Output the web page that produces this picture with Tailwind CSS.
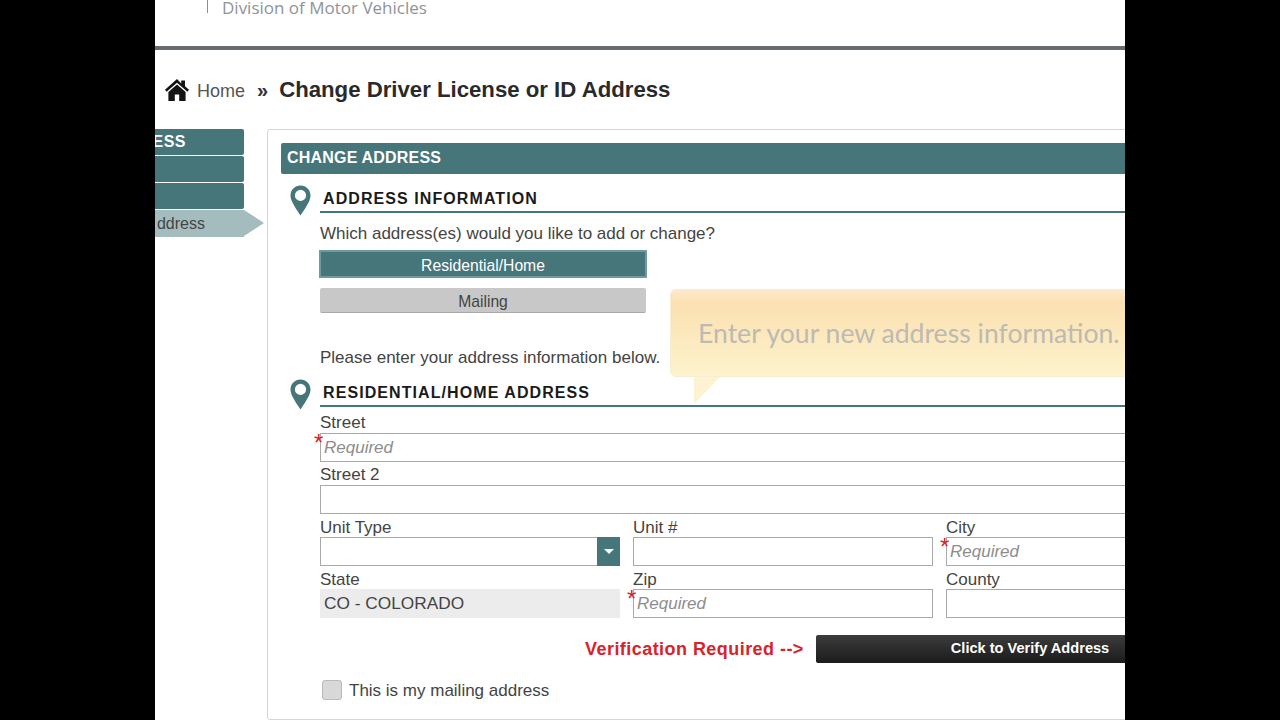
<!DOCTYPE html>
<html lang="en">
<head>
  <meta charset="UTF-8" />
  <title>Change Driver License or ID Address</title>
  <script src="https://cdn.jsdelivr.net/npm/@tailwindcss/browser@4"></script>
</head>
<body class="bg-black font-['Liberation_Sans',Arial,sans-serif] text-[#444]">
<div class="flex justify-center h-[720px] overflow-hidden">
  <main class="relative w-[970px] h-[720px] bg-white overflow-hidden">

    <!-- Header -->
    <header class="h-[50px] border-b-4 border-[#666c70] flex items-start">
      <span class="ml-[52px] w-px h-[13px] bg-[#8a8f94]"></span>
      <span class="ml-[14px] -mt-px font-['Open_Sans',sans-serif] text-[17px] leading-[17px] text-[#8f9498]">Division of Motor Vehicles</span>
    </header>

    <!-- Breadcrumb -->
    <nav class="h-[79px] flex items-center pl-[10px] pt-[1px]">
      <svg class="w-[24px] h-[22px] text-[#141414]" viewBox="0 0 24 22" fill="currentColor"><path d="M12 0 0 10.800l1.600 1.900L12 3.800l10.400 8.900 1.600-1.900-4-3.500V1.400h-3.800v3.100L12 0z"/><path d="M12 5.600 3.400 13v9h6.400v-6.400h4.400V22h6.400v-9L12 5.600z"/></svg>
      <a href="#" class="ml-[8px] text-[18px] mt-[3px] text-[#555]">Home</a>
      <span class="ml-[12px] text-[20px] font-bold text-[#333]">»</span>
      <h1 class="ml-[11px] text-[22.2px] font-bold text-[#2a2a2a]">Change Driver License or ID Address</h1>
    </nav>

    <div class="flex items-start">
      <!-- Side menu -->
      <aside class="w-[109px] shrink-0 flex flex-col gap-px text-[16px]">
        <div class="w-[89px] h-[26px] bg-[#46757a] rounded-r-[2px] text-white font-bold tracking-[0.5px] flex items-center justify-end pr-[58px]"><span class="whitespace-nowrap">ESS</span></div>
        <div class="w-[89px] h-[26px] bg-[#46757a] rounded-r-[2px]"></div>
        <div class="w-[89px] h-[26px] bg-[#46757a] rounded-r-[2px]"></div>
        <div class="relative w-[89px] h-[27px] bg-[#a4bcbe] text-[#444] flex items-center justify-end pr-[39px]">
          <span class="whitespace-nowrap">ddress</span>
          <span class="absolute left-[89px] top-0 border-y-[13.5px] border-y-transparent border-l-[20px] border-l-[#a4bcbe]"></span>
        </div>
      </aside>

      <!-- Panel -->
      <section class="ml-[3px] w-[900px] h-[591px] shrink-0 border border-[#d4d4d4] rounded-[3px] pt-[13px] pl-[13px]">
        <h2 class="h-[31px] bg-[#46757a] rounded-[2px] flex items-center pl-[6px] pb-[2px] text-white font-bold text-[16px] tracking-[0.2px]">CHANGE ADDRESS</h2>

        <div class="flex mt-[11px]">
          <svg class="ml-[9px] w-[21px] h-[31px] shrink-0" viewBox="0 0 21 31"><path fill-rule="evenodd" fill="#46757a" d="M10.500 0.500C4.800.5.500 4.900.500 10.500c0 4.600 3 9.700 10 20 7-10.300 10-15.400 10-20C20.500 4.900 16.200.5 10.500.5zm0 4.300a5.600 5.600 0 1 1 0 11.200 5.600 5.600 0 0 1 0-11.200z"/></svg>
          <h3 class="ml-[9px] w-[820px] h-[28px] border-b-2 border-[#46757a] pl-[3px] font-bold text-[16px] leading-[27px] tracking-[1.08px] text-[#1a1a1a]">ADDRESS INFORMATION</h3>
        </div>

        <div class="ml-[39px] -mt-[1px]">
          <p class="text-[17px] leading-[20px] mt-[9px]">Which address(es) would you like to add or change?</p>
          <button class="block -ml-px mt-[6px] pt-[3px] w-[328px] h-[28px] bg-[#46757a] border-2 border-[#6f9a9e] text-white text-[15.7px] leading-[20px]">Residential/Home</button>
          <button class="block mt-[10px] pt-[4px] w-[326px] h-[25px] bg-[#c8c8c8] border-b border-[#aaa] rounded-[2px] text-[#444] text-[15.7px] leading-[20px]">Mailing</button>
          <p class="text-[17px] leading-[20px] mt-[35px]">Please enter your address information below.</p>
        </div>

        <div class="flex mt-[12px]">
          <svg class="ml-[9px] -mt-px w-[21px] h-[31px] shrink-0" viewBox="0 0 21 31"><path fill-rule="evenodd" fill="#46757a" d="M10.500 0.500C4.800.5.500 4.900.500 10.500c0 4.600 3 9.700 10 20 7-10.300 10-15.400 10-20C20.500 4.900 16.200.5 10.500.5zm0 4.300a5.600 5.600 0 1 1 0 11.200 5.600 5.600 0 0 1 0-11.200z"/></svg>
          <h3 class="ml-[9px] -mt-px w-[820px] h-[28px] border-b-2 border-[#46757a] pl-[3px] font-bold text-[16px] leading-[28px] tracking-[1.08px] text-[#1a1a1a]">RESIDENTIAL/HOME ADDRESS</h3>
        </div>

        <!-- Address fields -->
        <div class="ml-[39px] -mt-[3px] grid grid-cols-[300px_300px_300px] gap-x-[13px] text-[17px]">
          <div class="col-span-3 w-[830px]">
            <label class="block h-[26px] leading-[32px]">Street</label>
            <div class="relative">
              <span class="absolute -left-[6px] -top-[2px] text-[#d8232a] text-[24px] leading-[24px]">*</span>
              <input class="block w-full h-[29px] border border-[#aaa] pl-[3px] placeholder:italic placeholder:text-[#8d8d8d]" placeholder="Required" />
            </div>
          </div>
          <div class="col-span-3 w-[830px]">
            <label class="block h-[23px] leading-[26px]">Street 2</label>
            <input class="block w-full h-[29px] border border-[#aaa]" />
          </div>
          <div>
            <label class="block h-[23px] leading-[27px]">Unit Type</label>
            <div class="flex h-[29px] border border-[#aaa]">
              <span class="flex-1"></span>
              <span class="w-[23px] -m-px h-[29px] bg-[#46757a] flex items-center justify-center"><span class="border-x-[5px] border-x-transparent border-t-[5px] border-t-white"></span></span>
            </div>
          </div>
          <div>
            <label class="block h-[23px] leading-[27px]">Unit #</label>
            <input class="block w-full h-[29px] border border-[#aaa]" />
          </div>
          <div>
            <label class="block h-[23px] leading-[27px]">City</label>
            <div class="relative">
              <span class="absolute -left-[6px] -top-[2px] text-[#d8232a] text-[24px] leading-[24px]">*</span>
              <input class="block w-full h-[29px] border border-[#aaa] pl-[3px] placeholder:italic placeholder:text-[#8d8d8d]" placeholder="Required" />
            </div>
          </div>
          <div>
            <label class="block h-[23px] leading-[27px]">State</label>
            <div class="h-[29px] bg-[#ececec] pl-[4px] leading-[29px] text-[17.3px]">CO - COLORADO</div>
          </div>
          <div>
            <label class="block h-[23px] leading-[27px]">Zip</label>
            <div class="relative">
              <span class="absolute -left-[6px] -top-[2px] text-[#d8232a] text-[24px] leading-[24px]">*</span>
              <input class="block w-full h-[29px] border border-[#aaa] pl-[3px] placeholder:italic placeholder:text-[#8d8d8d]" placeholder="Required" />
            </div>
          </div>
          <div>
            <label class="block h-[23px] leading-[27px]">County</label>
            <input class="block w-full h-[29px] border border-[#aaa]" />
          </div>
        </div>

        <!-- Verify -->
        <div class="flex items-center mt-[17px] ml-[304px]">
          <span class="text-[18px] font-bold text-[#d8232a] tracking-[0.45px] whitespace-nowrap">Verification Required --&gt;</span>
          <button class="ml-[12px] w-[400px] h-[28px] rounded-[2px] bg-gradient-to-b from-[#3c3c3c] to-[#1c1c1c] text-white font-bold text-[14.6px] text-left pl-[135px] shrink-0">Click to Verify Address</button>
        </div>

        <label class="flex items-center ml-[41px] mt-[14px]">
          <span class="w-[20px] h-[20px] bg-[#d8d8d8] border border-[#bbb] rounded-[3px]"></span>
          <span class="ml-[7px] text-[17px] mt-px">This is my mailing address</span>
        </label>
      </section>
    </div>

    <!-- Tooltip callout -->
    <div class="absolute left-[515px] top-[289px] w-[500px] h-[88px] rounded-[6px] border border-[#f8ecd4] bg-gradient-to-b from-[#fdeacb] via-[#fbe0b2] via-15% to-[#fdf3cc] pl-[27px] pt-[26px] font-['Lato',sans-serif] text-[26.6px] leading-[34px] whitespace-nowrap text-[#bdbab2]">
      Enter your new address information.
      <span class="absolute left-[23px] top-[87px] w-[26px] h-[27px] bg-[#fdf3d2] [clip-path:polygon(0_0,100%_0,0_100%)]"></span>
    </div>
  </main>
</div>
</body>
</html>
